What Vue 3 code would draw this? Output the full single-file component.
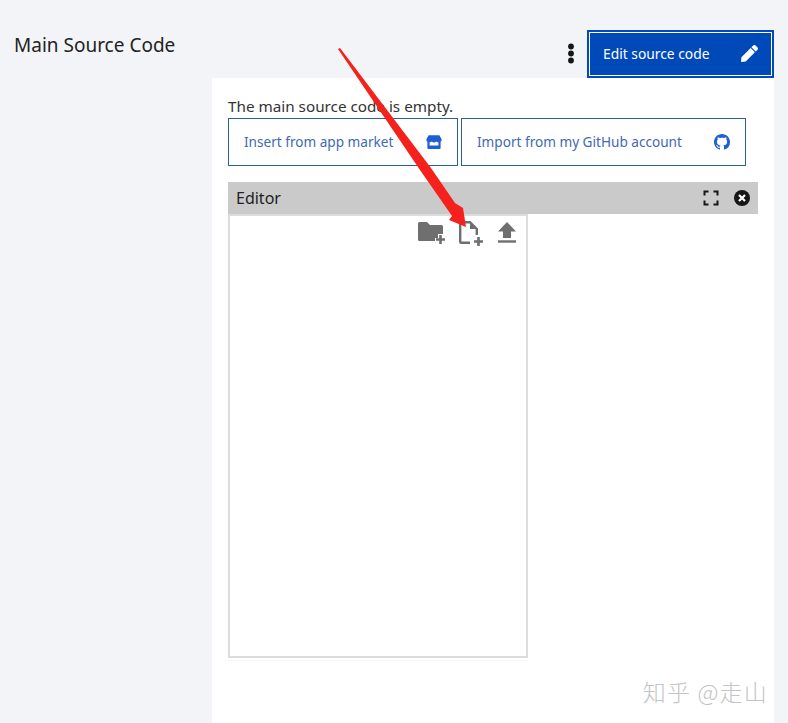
<script setup>
const title = 'Main Source Code';
</script>

<template>
  <div class="page">
    <aside class="side">
      <h2>{{ title }}</h2>
    </aside>

    <main class="main">
      <div class="top-actions">
        <svg class="more" viewBox="0 0 8 22" width="8" height="22">
          <circle cx="4" cy="3.5" r="2.9" />
          <circle cx="4" cy="10.5" r="2.9" />
          <circle cx="4" cy="17.5" r="2.9" />
        </svg>
        <button class="edit-btn">
          <span>Edit source code</span>
          <svg viewBox="0 0 512 512" width="17" height="17">
            <path fill="#fff" d="M290.700 93.200l128 128L141 498.900l-114.100 12.600c-15.300 1.700-28.200-11.200-26.500-26.500l12.700-114.200L290.700 93.200zm207.200-19.100l-60.100-60.100c-18.700-18.700-49.100-18.700-67.900 0l-56.600 56.600 128 128 56.600-56.600c18.800-18.800 18.800-49.200 0-67.900z" />
          </svg>
        </button>
      </div>

      <section class="panel">
        <p class="empty">The main source code is empty.</p>
        <div class="sources">
          <a class="source first">
            <span>Insert from app market</span>
            <svg viewBox="0 0 16 16" width="16" height="16">
              <path fill="#1f5fd6" d="M2.600 1.200h10.800L15.600 5.200v.8a2 2 0 0 1-1 1.700V14a1 1 0 0 1-1 1H2.400a1 1 0 0 1-1-1V7.700a2 2 0 0 1-1-1.700v-.8zM3.600 8.300v3.200h8.800V8.300c-.9.100-1.700-.2-2.200-.8-.5.600-1.300.9-2.200.9s-1.700-.3-2.200-.9c-.5.600-1.300.9-2.200.8z" />
            </svg>
          </a>
          <a class="source second">
            <span>Import from my GitHub account</span>
            <svg viewBox="0 0 16 16" width="16" height="16">
              <path fill="#1f5fd6" d="M8 0C3.580 0 0 3.580 0 8c0 3.540 2.290 6.530 5.470 7.590.4.070.55-.17.55-.38 0-.19-.01-.82-.01-1.490-2.010.37-2.530-.49-2.690-.94-.09-.23-.48-.94-.82-1.130-.28-.15-.68-.52-.01-.53.630-.01 1.080.58 1.230.82.720 1.210 1.870.87 2.330.66.070-.52.280-.87.510-1.070-1.780-.2-3.640-.89-3.640-3.950 0-.87.310-1.590.820-2.150-.08-.2-.36-1.020.08-2.120 0 0 .67-.21 2.200.82.640-.18 1.320-.27 2-.27s1.360.09 2 .27c1.530-1.040 2.200-.82 2.200-.82.440 1.100.16 1.920.08 2.120.51.560.82 1.270.82 2.150 0 3.070-1.870 3.750-3.650 3.950.29.25.54.73.54 1.480 0 1.070-.01 1.930-.01 2.200 0 .21.150.46.550.38A8.010 8.010 0 0 0 16 8c0-4.420-3.580-8-8-8z" />
            </svg>
          </a>
        </div>

        <div class="editor-bar">
          <span>Editor</span>
          <div class="bar-icons">
            <svg viewBox="0 0 16 16" width="16" height="16">
              <path fill="none" stroke="#161616" stroke-width="2" d="M1.500 5.500V1.500H5.500M10.500 1.500h4v4M14.500 10.500v4h-4M5.500 14.500h-4v-4" />
            </svg>
            <svg viewBox="0 0 16 16" width="16" height="16">
              <circle cx="8" cy="8" r="8" fill="#161616" />
              <path stroke="#fff" stroke-width="2.200" d="M5 5l6 6M11 5l-6 6" />
            </svg>
          </div>
        </div>

        <div class="editor-box">
          <div class="file-tools">
            <svg viewBox="0 0 29 26" width="29" height="26">
              <path fill="#6f6f6f" d="M1 3.500A1.500 1.500 0 0 1 2.500 2h7.500l3 3h11.500A1.500 1.500 0 0 1 26 6.500V14h-5v4h-3v3H2.500A1.500 1.500 0 0 1 1 19.500z" />
              <path stroke="#6f6f6f" stroke-width="2.600" d="M23.500 15v9M19 19.500h9" />
            </svg>
            <svg viewBox="0 0 26 26" width="26" height="26">
              <path fill="none" stroke="#6f6f6f" stroke-width="2.400" d="M12 22.800H3.200a1 1 0 0 1-1-1V3.200a1 1 0 0 1 1-1h8.800l6.800 6.800v6" />
              <path fill="#6f6f6f" d="M12 2l7 7h-7z" />
              <path stroke="#6f6f6f" stroke-width="2.600" d="M20.500 17v9M16 21.500h9" />
            </svg>
            <svg viewBox="0 0 22 26" width="22" height="26">
              <path fill="#6f6f6f" d="M11 2l9 9.500h-5V18H7v-6.500H2z" />
              <path stroke="#6f6f6f" stroke-width="2.400" d="M2 21.500h18" />
            </svg>
          </div>
        </div>
        <div class="box-rule"></div>
      </section>
    </main>

    <!-- red annotation arrow on top of the screenshot -->
    <svg class="arrow" viewBox="0 0 788 723" width="788" height="723">
      <path fill="#f5211c" d="M338 49L340 48 431 168 455 203 463 208 466 227 449 220 452 216 420 170z" />
    </svg>
    <div class="watermark">知乎 @走山</div>
  </div>
</template>

<style scoped>
.page {
  position: relative;
  display: flex;
  width: 788px;
  height: 723px;
  overflow: hidden;
  background: #f3f4f8;
  font-family: "Noto Sans", "Open Sans", sans-serif;
  color: #161616;
}

.side {
  width: 212px;
  flex-shrink: 0;
  padding: 33px 0 0 14px;
  box-sizing: border-box;
}

.side h2 {
  margin: 0;
  font-size: 19px;
  font-weight: 400;
  line-height: 24px;
  color: #222;
}

.main {
  width: 562px;
  display: flex;
  flex-direction: column;
}

.top-actions {
  display: flex;
  justify-content: flex-end;
  align-items: center;
  gap: 12px;
  height: 48px;
  margin-top: 30px;
}

.more {
  fill: #161616;
}

.edit-btn {
  display: flex;
  align-items: center;
  justify-content: space-between;
  width: 187px;
  height: 48px;
  box-sizing: border-box;
  padding: 0 14px 2px 14px;
  background: #0049b8;
  border: 2px solid #0049b8;
  box-shadow: inset 0 0 0 1px #fff;
  color: #fff;
  font: inherit;
  font-size: 13.8px;
}

.panel {
  flex: 1;
  background: #fff;
  padding: 20px 16px 0;
}

.empty {
  margin: 0 0 4px;
  font-size: 15.25px;
  line-height: 16px;
  color: #333;
}

.sources {
  display: flex;
  gap: 3px;
  height: 48px;
}

.source {
  display: flex;
  align-items: center;
  justify-content: space-between;
  box-sizing: border-box;
  padding: 0 15px 2px;
  border: 1px solid #2a5f9e;
  font-size: 13.6px;
  color: #3f6ab4;
}

.source svg {
  margin-top: 2px;
}

.first { width: 230px; }
.second { width: 285px; }

.editor-bar {
  display: flex;
  align-items: center;
  justify-content: space-between;
  height: 32px;
  margin-top: 16px;
  padding: 0 8px;
  background: #cacaca;
  font-size: 16px;
  color: #222;
}

.bar-icons {
  display: flex;
  gap: 15px;
}

.editor-box {
  width: 300px;
  height: 444px;
  box-sizing: border-box;
  border: 2px solid #dcdcdc;
}

.file-tools {
  display: flex;
  justify-content: flex-end;
  gap: 12px;
  padding: 4px 8px 0 0;
}

.box-rule {
  width: 304px;
  height: 1px;
  margin: 2px 0 0 -4px;
  background: #f7f7f7;
}

.arrow {
  position: absolute;
  top: 0;
  left: 0;
  pointer-events: none;
}

.watermark {
  position: absolute;
  right: 20px;
  bottom: 17px;
  font-family: "Noto Sans CJK SC", sans-serif;
  font-size: 23px;
  font-weight: 300;
  letter-spacing: 1.2px;
  line-height: 30px;
  color: #c4c4c4;
}
</style>

<style>
body {
  margin: 0;
}
</style>
